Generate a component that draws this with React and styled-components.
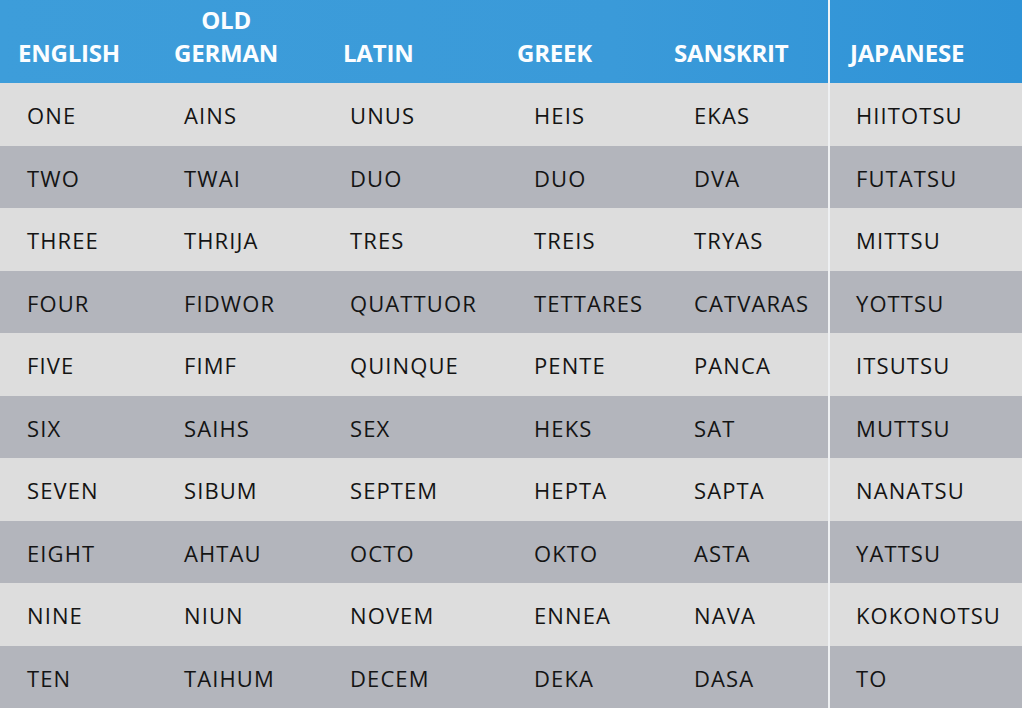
import React from "react";
import styled, { createGlobalStyle } from "styled-components";

const Global = createGlobalStyle`
  html, body { margin: 0; padding: 0; background: #b4b6bd; }
  body { font-family: "Open Sans", "Liberation Sans", sans-serif; }
`;

const COLS = [
  { w: 165, h: 18, b: 27 },
  { w: 170, h: 9, b: 19 },
  { w: 175, h: 8, b: 15 },
  { w: 160, h: 7, b: 24 },
  { w: 158, h: 4, b: 24 },
  { w: 194, h: 20, b: 26, divider: true },
];

const template = COLS.map((c) => `${c.w}px`).join(" ");

const Table = styled.div`
  width: 1022px;
  height: 708px;
  overflow: hidden;
  display: flex;
  flex-direction: column;
`;

const HeaderRow = styled.div`
  display: grid;
  grid-template-columns: ${template};
  height: 83px;
  background: linear-gradient(90deg, #3d9dda 0%, #3a9ad9 60%, #2f93d7 100%);
`;

const HeadCell = styled.div`
  display: flex;
  align-items: flex-end;
  padding: 0 0 14px ${(p) => p.$pad}px;
  border-left: ${(p) => (p.$divider ? "2px solid #eef3f7" : "none")};
  color: #fbfdff;
  font-weight: 700;
  font-size: 24px;
  line-height: 33px;
  letter-spacing: -0.2px;
  text-align: center;
  box-sizing: border-box;
  white-space: nowrap;
`;

const HeadLabel = styled.div`
  display: flex;
  flex-direction: column;
  align-items: center;
`;

const Row = styled.div`
  display: grid;
  grid-template-columns: ${template};
  height: 62.5px;
  background: ${(p) => (p.$dark ? "#b3b5bc" : "#dddddd")};
`;

const Cell = styled.div`
  display: flex;
  align-items: center;
  padding: 2px 0 0 ${(p) => p.$pad}px;
  border-left: ${(p) => (p.$divider ? "2px solid #eef0f2" : "none")};
  color: #141414;
  font-size: 22px;
  letter-spacing: 1.1px;
  box-sizing: border-box;
  white-space: nowrap;
`;

const HEADERS = [
  ["ENGLISH"],
  ["OLD", "GERMAN"],
  ["LATIN"],
  ["GREEK"],
  ["SANSKRIT"],
  ["JAPANESE"],
];

const DATA = [
  ["ONE", "AINS", "UNUS", "HEIS", "EKAS", "HIITOTSU"],
  ["TWO", "TWAI", "DUO", "DUO", "DVA", "FUTATSU"],
  ["THREE", "THRIJA", "TRES", "TREIS", "TRYAS", "MITTSU"],
  ["FOUR", "FIDWOR", "QUATTUOR", "TETTARES", "CATVARAS", "YOTTSU"],
  ["FIVE", "FIMF", "QUINQUE", "PENTE", "PANCA", "ITSUTSU"],
  ["SIX", "SAIHS", "SEX", "HEKS", "SAT", "MUTTSU"],
  ["SEVEN", "SIBUM", "SEPTEM", "HEPTA", "SAPTA", "NANATSU"],
  ["EIGHT", "AHTAU", "OCTO", "OKTO", "ASTA", "YATTSU"],
  ["NINE", "NIUN", "NOVEM", "ENNEA", "NAVA", "KOKONOTSU"],
  ["TEN", "TAIHUM", "DECEM", "DEKA", "DASA", "TO"],
];

export default function App() {
  return (
    <>
      <Global />
      <Table>
        <HeaderRow>
          {HEADERS.map((lines, i) => (
            <HeadCell key={i} $pad={COLS[i].h} $divider={COLS[i].divider}>
              <HeadLabel>
                {lines.map((l, j) => (
                  <span key={j}>{l}</span>
                ))}
              </HeadLabel>
            </HeadCell>
          ))}
        </HeaderRow>
        {DATA.map((row, r) => (
          <Row key={r} $dark={r % 2 === 1}>
            {row.map((v, i) => (
              <Cell key={i} $pad={COLS[i].b} $divider={COLS[i].divider}>
                {v}
              </Cell>
            ))}
          </Row>
        ))}
      </Table>
    </>
  );
}
